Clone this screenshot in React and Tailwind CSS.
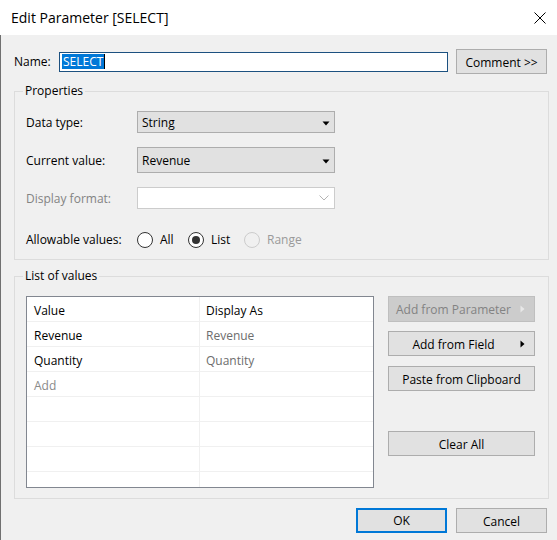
import React from "react";

const rows = [
  { value: "Value", display: "Display As", header: true },
  { value: "Revenue", display: "Revenue" },
  { value: "Quantity", display: "Quantity" },
  { value: "Add", display: "", placeholder: true },
  { value: "", display: "" },
  { value: "", display: "" },
  { value: "", display: "" },
  { value: "", display: "" },
];

function DownTriangle() {
  return (
    <svg width="8" height="5" viewBox="0 0 8 5">
      <path d="M0.5 0.5h7L4 4.5z" fill="#000000" />
    </svg>
  );
}

function RightTriangle({ color }) {
  return (
    <svg width="5" height="8" viewBox="0 0 5 8">
      <path d="M0.5 0.5v7L4.5 4z" fill={color} />
    </svg>
  );
}

function Select({ value, tall }) {
  return (
    <div
      className={`w-[198px] ${tall ? "h-[26px]" : "h-[22px]"} bg-[#e1e1e1] border border-[#adadad] flex items-center justify-between pl-[4px] pr-[4px]`}
    >
      <span className="pt-[1px]">{value}</span>
      <span className="pt-[2px] flex">
        <DownTriangle />
      </span>
    </div>
  );
}

function Radio({ label, checked, disabled, width }) {
  return (
    <div className={`flex items-center ${width}`}>
      <span
        className={`w-[16px] h-[16px] rounded-full border flex items-center justify-center ${
          disabled ? "border-[#cccccc] bg-[#f0f0f0]" : "border-[#333333] bg-white"
        }`}
      >
        {checked && <span className="w-[8px] h-[8px] rounded-full bg-[#333333]" />}
      </span>
      <span className={`ml-[7px] ${disabled ? "text-[#9a9a9a]" : ""}`}>{label}</span>
    </div>
  );
}

function Button({ children, className = "" }) {
  return (
    <div
      className={`h-[25px] pt-[3px] bg-[#e1e1e1] border border-[#adadad] flex items-center justify-center ${className}`}
    >
      {children}
    </div>
  );
}

export default function App() {
  return (
    <div className="w-[557px] h-[540px] bg-[#f0f0f0] flex flex-col text-[12px] text-black font-['Open_Sans',sans-serif] overflow-hidden">
      <header className="h-[35px] shrink-0 bg-white flex items-center justify-between pl-[11px] pr-[11px]">
        <span className="text-[14px]">Edit Parameter [SELECT]</span>
        <svg width="12" height="12" viewBox="0 0 12 12">
          <path d="M0.5 0.5l11 11M11.5 0.5l-11 11" stroke="#000" strokeWidth="1" />
        </svg>
      </header>

      <div className="flex-1 border-l border-[#707070] pl-[13px] pr-[9px] flex flex-col">
        {/* name row */}
        <div className="mt-[14px] h-[25px] flex items-center">
          <span className="w-[45px] pt-[1px]">Name:</span>
          <div className="w-[389px] h-[20px] bg-white border border-[#1c5180] flex items-center pl-[2px]">
            <span className="bg-[#0078d7] text-white leading-[15px] px-[1px]">SELECT</span>
            <span className="w-[1px] h-[15px] bg-black" />
          </div>
          <Button className="ml-[8px] w-[91px]">Comment &gt;&gt;</Button>
        </div>

        {/* properties */}
        <div className="relative mt-[17px] w-[535px] h-[169px] border border-[#dcdcdc] pl-[11px] pt-[19px]">
          <span className="absolute -top-[10px] left-[8px] px-[2px] bg-[#f0f0f0]">Properties</span>
          <div className="flex items-center">
            <span className="w-[111px] pt-[2px]">Data type:</span>
            <Select value="String" />
          </div>
          <div className="flex items-center mt-[14px]">
            <span className="w-[111px] pt-[1px]">Current value:</span>
            <Select value="Revenue" tall />
          </div>
          <div className="flex items-center mt-[14px]">
            <span className="w-[111px] pt-[1px] text-[#838383]">Display format:</span>
            <div className="w-[198px] h-[22px] bg-white border border-[#cccccc] flex items-center justify-end pr-[5px]">
              <svg width="10" height="6" viewBox="0 0 10 6">
                <path d="M0.5 0.5L5 5l4.5-4.5" fill="none" stroke="#b4b4b4" strokeWidth="1" />
              </svg>
            </div>
          </div>
          <div className="flex items-center mt-[22px]">
            <span className="w-[111px]">Allowable values:</span>
            <Radio label="All" width="w-[51px]" />
            <Radio label="List" checked width="w-[56px]" />
            <Radio label="Range" disabled />
          </div>
        </div>

        {/* list of values */}
        <div className="relative mt-[16px] w-[535px] h-[223px] border border-[#dcdcdc] pl-[11px] pt-[19px] flex">
          <span className="absolute -top-[10px] left-[8px] px-[2px] bg-[#f0f0f0]">List of values</span>
          <div className="w-[348px] h-[192px] bg-white border border-[#828790] overflow-hidden">
            {rows.map((r, i) => (
              <div key={i} className="h-[25px] flex border-b border-[#f0f0f0]">
                <div
                  className={`w-[173px] pl-[7px] pt-[3px] flex items-center border-r border-[#f0f0f0] ${
                    r.placeholder ? "text-[#8a8a8a]" : "text-black"
                  }`}
                >
                  {r.value}
                </div>
                <div
                  className={`flex-1 pl-[6px] pt-[3px] flex items-center ${
                    r.header ? "text-black" : "text-[#6d6d6d]"
                  }`}
                >
                  {r.display}
                </div>
              </div>
            ))}
          </div>
          <div className="ml-[14px] w-[147px] flex flex-col">
            <div className="relative h-[26px] pt-[2px] bg-[#cccccc] border border-[#bfbfbf] flex items-center justify-center pr-[16px] text-[#838383]">
              Add from Parameter
              <span className="absolute right-[9px] top-[8px] flex">
                <RightTriangle color="#e8e8e8" />
              </span>
            </div>
            <Button className="relative mt-[9px] pr-[16px]">
              Add from Field
              <span className="absolute right-[9px] top-[8px] flex">
                <RightTriangle color="#000000" />
              </span>
            </Button>
            <Button className="mt-[10px]">Paste from Clipboard</Button>
            <Button className="mt-[40px]">Clear All</Button>
          </div>
        </div>

        {/* footer buttons */}
        <div className="mt-[9px] flex justify-end pr-[1px]">
          <div className="w-[91px] h-[25px] pt-[1px] bg-[#e1e1e1] border-2 border-[#0078d7] flex items-center justify-center">
            OK
          </div>
          <Button className="ml-[9px] w-[91px]">Cancel</Button>
        </div>
      </div>
    </div>
  );
}
